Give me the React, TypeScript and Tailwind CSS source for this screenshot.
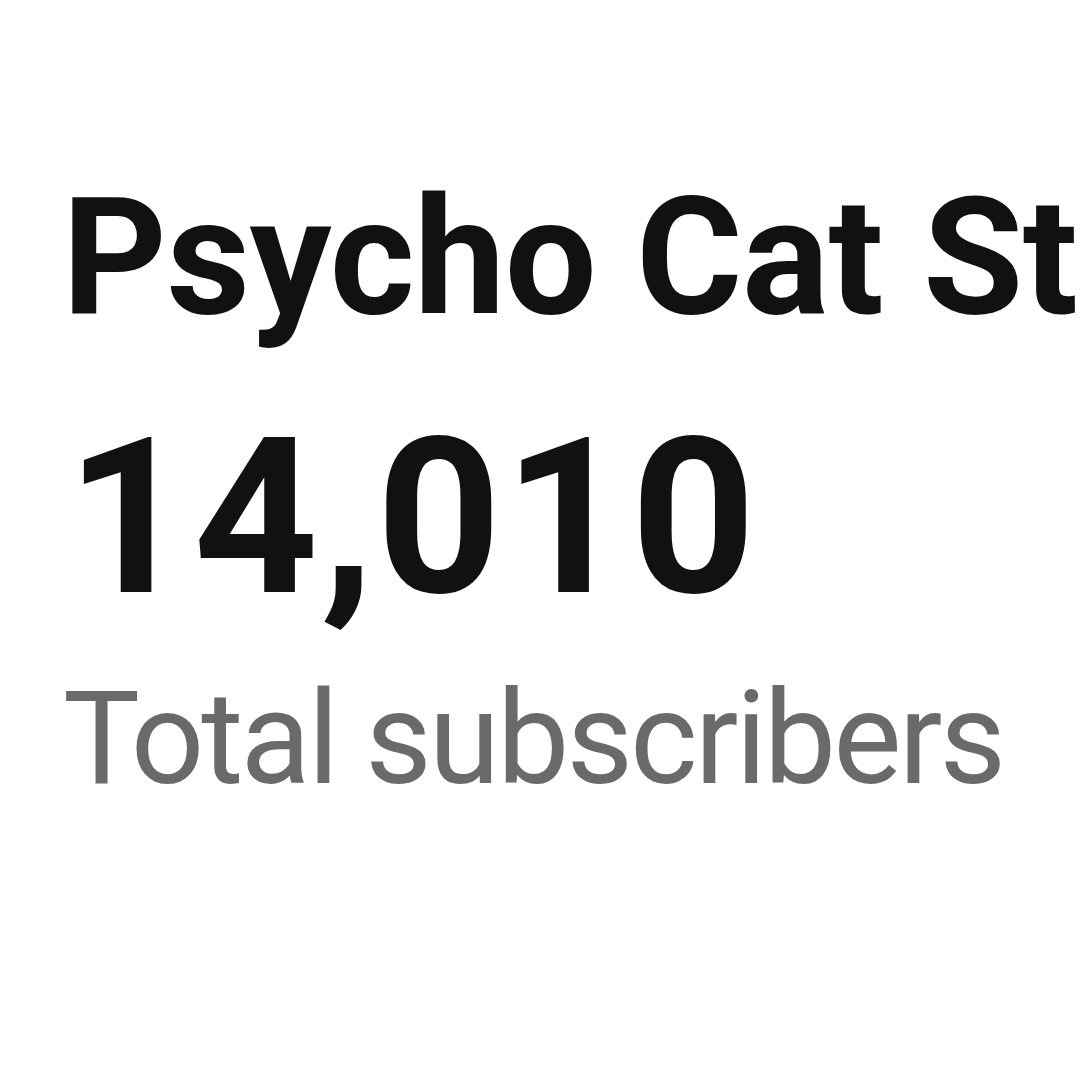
export default function App() {
  const channel = {
    name: 'Psycho Cat Studio',
    subscribers: 14010,
  }

  return (
    <div className="w-[1080px] h-[1080px] overflow-hidden bg-white font-['Roboto','Inter',sans-serif]">
      <div className="flex flex-col pl-[66px] pt-[176px]">
        <h1 className="-ml-[4px] whitespace-nowrap text-[163px] leading-none font-bold tracking-[-0.004em] text-[#111111]">
          {channel.name}
        </h1>
        <p className="mt-[70px] text-[218px] leading-none font-bold tracking-[0.01em] text-[#111111]">
          {channel.subscribers.toLocaleString('en-US')}
        </p>
        <p className="mt-[47px] -ml-[3px] whitespace-nowrap text-[129px] leading-none font-normal tracking-[-0.023em] text-[#6a6a6a]">
          Total subscribers
        </p>
      </div>
    </div>
  )
}
